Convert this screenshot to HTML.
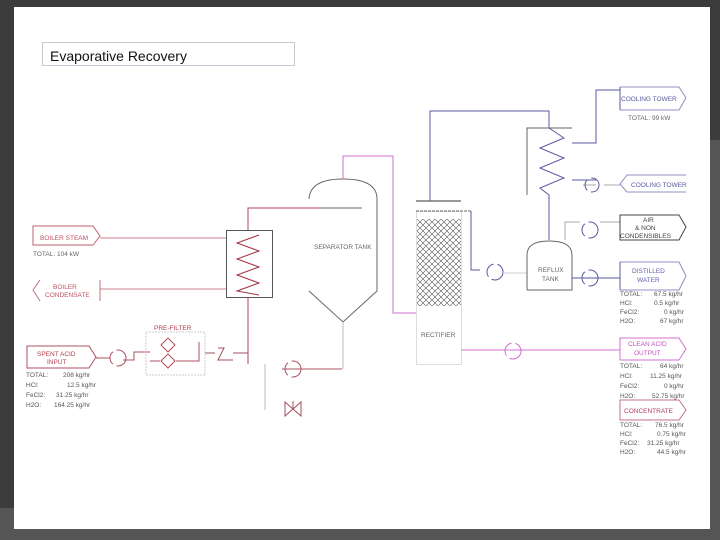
<!DOCTYPE html>
<html><head><meta charset="utf-8"><style>
html,body{margin:0;padding:0;background:#3c3c3c;}
svg{display:block}
text{font-family:"Liberation Sans",sans-serif;}
.s{font-size:6.5px;}
</style></head><body>
<svg width="720" height="540" viewBox="0 0 720 540" xmlns="http://www.w3.org/2000/svg">
<rect x="0" y="0" width="720" height="540" fill="#3c3c3c"/>
<rect x="0" y="508" width="720" height="32" fill="#555"/>
<rect x="708" y="140" width="12" height="400" fill="#555"/>
<rect x="14" y="7" width="696" height="522" fill="#fff"/>
<rect x="42.5" y="42.5" width="252" height="23" fill="#fff" stroke="#c3ccd4"/>
<text x="50" y="61" font-size="14" fill="#111">Evaporative Recovery</text>

<g fill="none" stroke-width="1">
<path d="M33 226H93L100 236L93 245H33Z" stroke="#c06070"/>
<text x="40" y="240" class="s" fill="#c05060" stroke="none">BOILER STEAM</text>
<text x="33" y="256" class="s" fill="#666" stroke="none">TOTAL: 104 kW</text>
<path d="M100 238H226" stroke="#d08090"/>
<path d="M40 280L33 290L40 301M100 280V301" stroke="#c07080"/>
<text x="53" y="289" class="s" fill="#c05060" stroke="none">BOILER</text>
<text x="45" y="297" class="s" fill="#c05060" stroke="none">CONDENSATE</text>
<path d="M100 289H226" stroke="#d08090"/>
<rect x="226.5" y="230.5" width="46" height="67" stroke="#555"/>
<path d="M259 235L237 243L259 251L237 259L259 267L237 275L259 283L237 291L259 295" stroke="#a03040"/>
<path d="M248 230V208H362M248 297V364" stroke="#b04060"/>
<path d="M27 346H89L96 357L89 368H27Z" stroke="#b05060"/>
<text x="37" y="356" class="s" fill="#b04050" stroke="none">SPENT ACID</text>
<text x="47" y="364" class="s" fill="#b04050" stroke="none">INPUT</text>
<g class="s" fill="#555" stroke="none">
<text x="26" y="377">TOTAL:</text><text x="63" y="377">208 kg/hr</text>
<text x="26" y="387">HCl:</text><text x="67" y="387">12.5 kg/hr</text>
<text x="26" y="397">FeCl2:</text><text x="56" y="397">31.25 kg/hr</text>
<text x="26" y="407">H2O:</text><text x="54" y="407">164.25 kg/hr</text>
</g>
<path d="M96 358H110" stroke="#b05060"/>
<circle cx="118" cy="358" r="8" stroke="#b05060" stroke-dasharray="14 4"/>
<path d="M123 360H134V352H150" stroke="#b05060"/>
<rect x="146" y="332" width="59" height="43" stroke="#ccc" stroke-dasharray="2 1"/>
<text x="154" y="330" class="s" fill="#b04050" stroke="none">PRE-FILTER</text>
<path d="M168 338L175 345L168 352L161 345ZM168 354L175 361L168 368L161 361Z" stroke="#b05060"/>
<path d="M150 361H160M176 361H199V342" stroke="#b05060"/>
<path d="M205 353H215M218 348H224L218 360H233M233 353H248" stroke="#a05060"/>
<path d="M265 364V410" stroke="#bbb"/>
<circle cx="293" cy="369" r="8" stroke="#b05060" stroke-dasharray="14 4"/>
<path d="M282 369H342" stroke="#b05060"/>
<path d="M285 402L301 416V402L285 416ZM293 409V401" stroke="#a05060"/>
<path d="M309 199Q310 179 343 179Q377 179 377 199V291L343 322L309 291" stroke="#666"/>
<path d="M343 322V369" stroke="#bbb"/>
<path d="M322 208H362" stroke="#666" stroke-dasharray="3 1"/>
<text x="314" y="249" class="s" fill="#666" stroke="none">SEPARATOR TANK</text>
<path d="M343 179V156H393V313H416" stroke="#d070d0"/>
<rect x="416.5" y="211.5" width="45" height="153" stroke="#ddd"/>
<path d="M416 201H461" stroke="#333"/>
<path d="M416 211H471" stroke="#666" stroke-dasharray="3 1"/>
<rect x="417" y="219" width="44" height="87" fill="url(#h)" stroke="none"/>
<text x="421" y="337" class="s" fill="#666" stroke="none">RECTIFIER</text>
<path d="M430 201V111H549V128" stroke="#5a5aa0"/>
<path d="M471 211V270H480" stroke="#5a5aa0"/>
<circle cx="495" cy="272" r="8" stroke="#5a5aa0" stroke-dasharray="16 4"/>
<path d="M503 273H527" stroke="#ccc"/>
<path d="M527 195V128H572" stroke="#666"/>
<path d="M549 128L564 138L540 148L564 158L540 168L564 178L540 188L549 195V240" stroke="#5a5aa0"/>
<path d="M572 143H596V90H620M572 180H596" stroke="#5a5aa0"/>
<path d="M527 290V255Q527 241 549 241Q572 241 572 255V290H527" stroke="#666"/>
<text x="538" y="272" class="s" fill="#666" stroke="none">REFLUX</text>
<text x="542" y="281" class="s" fill="#666" stroke="none">TANK</text>
<path d="M583 185H596M604 185H620" stroke="#aaa"/>
<circle cx="592" cy="185" r="7" stroke="#5a5aa0" stroke-dasharray="12 4"/>
<path d="M565 240V222H580M600 222H620" stroke="#aaa"/>
<circle cx="590" cy="230" r="8" stroke="#5a5aa0" stroke-dasharray="14 4"/>
<path d="M572 278H620" stroke="#5a5aa0"/>
<circle cx="590" cy="278" r="8" stroke="#5a5aa0" stroke-dasharray="14 4"/>
<path d="M461 350H620" stroke="#d070d0"/>
<circle cx="513" cy="351" r="8" stroke="#d070d0" stroke-dasharray="16 4"/>
<path d="M620 87H679L686 98L679 110H620" stroke="#9090c0"/><path d="M620 87V110" stroke="#5a5aa0"/>
<text x="621" y="101" class="s" fill="#5a5aa0" stroke="none">COOLING TOWER</text>
<text x="628" y="120" class="s" fill="#666" stroke="none">TOTAL:       99 kW</text>
<path d="M686 175H627L620 184L627 192H686" stroke="#9090c0"/>
<text x="631" y="187" class="s" fill="#5a5aa0" stroke="none">COOLING TOWER</text>
<path d="M620 215H679L686 227L679 240H620Z" stroke="#444"/>
<text x="643" y="222" class="s" fill="#444" stroke="none">AIR</text>
<text x="635" y="230" class="s" fill="#444" stroke="none">&amp; NON</text>
<text x="620" y="238" class="s" fill="#444" stroke="none">CONDENSIBLES</text>
<path d="M620 262H679L686 276L679 290H620" stroke="#9090c0"/><path d="M620 262V290" stroke="#5a5aa0"/>
<text x="632" y="273" class="s" fill="#6060b0" stroke="none">DISTILLED</text>
<text x="637" y="282" class="s" fill="#6060b0" stroke="none">WATER</text>
<g class="s" fill="#555" stroke="none">
<text x="620" y="296">TOTAL:</text><text x="654" y="296">67.5 kg/hr</text>
<text x="620" y="305">HCl:</text><text x="654" y="305">0.5 kg/hr</text>
<text x="620" y="314">FeCl2:</text><text x="664" y="314">0 kg/hr</text>
<text x="620" y="323">H2O:</text><text x="660" y="323">67 kg/hr</text>
</g>
<path d="M620 338H679L686 349L679 360H620Z" stroke="#d070d0"/>
<text x="628" y="346" class="s" fill="#c050c0" stroke="none">CLEAN ACID</text>
<text x="634" y="355" class="s" fill="#c050c0" stroke="none">OUTPUT</text>
<g class="s" fill="#555" stroke="none">
<text x="620" y="368">TOTAL:</text><text x="660" y="368">64 kg/hr</text>
<text x="620" y="378">HCl:</text><text x="650" y="378">11.25 kg/hr</text>
<text x="620" y="388">FeCl2:</text><text x="664" y="388">0 kg/hr</text>
<text x="620" y="398">H2O:</text><text x="652" y="398">52.75 kg/hr</text>
</g>
<path d="M620 400H679L686 410L679 420H620Z" stroke="#c07090"/>
<text x="624" y="413" class="s" fill="#b04060" stroke="none">CONCENTRATE</text>
<g class="s" fill="#555" stroke="none">
<text x="620" y="427">TOTAL:</text><text x="655" y="427">76.5 kg/hr</text>
<text x="620" y="436">HCl:</text><text x="657" y="436">0.75 kg/hr</text>
<text x="620" y="445">FeCl2:</text><text x="647" y="445">31.25 kg/hr</text>
<text x="620" y="454">H2O:</text><text x="657" y="454">44.5 kg/hr</text>
</g>
</g>
<defs><pattern id="h" width="6" height="6" patternUnits="userSpaceOnUse"><path d="M0 0L6 6M6 0L0 6" stroke="#555" stroke-width="0.6"/></pattern></defs>
</svg>
</body></html>
